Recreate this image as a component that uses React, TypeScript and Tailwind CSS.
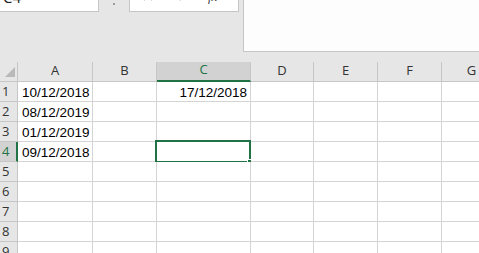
import { X, Check } from 'lucide-react';

const cols = [
  { key: 'A', w: 'w-[75px]' },
  { key: 'B', w: 'w-[64px]' },
  { key: 'C', w: 'w-[94px]' },
  { key: 'D', w: 'w-[63px]' },
  { key: 'E', w: 'w-[64px]' },
  { key: 'F', w: 'w-[64px]' },
  { key: 'G', w: 'w-[60px]' },
];

const data: Record<string, string> = {
  A1: '10/12/2018',
  A2: '08/12/2019',
  A3: '01/12/2019',
  A4: '09/12/2018',
  C1: '17/12/2018',
};

const rows = [1, 2, 3, 4, 5, 6, 7, 8, 9];

export default function App() {
  return (
    <div className="w-[479px] h-[253px] overflow-hidden bg-[#e6e6e6] font-['Liberation_Sans',Arial,sans-serif]">
      {/* Formula bar area */}
      <div className="flex h-[62px]">
        <div className="flex items-start w-[243px] shrink-0">
          <div className="w-[99px] h-[12px] bg-white border-r border-b border-[#c6c6c6] overflow-hidden">
            <div className="-mt-[11px] pl-[3px] text-[15px] leading-[16px] text-[#222] font-['Open_Sans',sans-serif]">C4</div>
          </div>
          <div className="w-[30px] flex justify-center pt-[3px]">
            <div className="w-[2px] h-[2px] bg-[#9a9a9a]" />
          </div>
          <div className="w-[110px] h-[12px] bg-white border-l border-r border-b border-[#c6c6c6] overflow-hidden flex items-start">
            <X className="w-[14px] h-[14px] -mt-[10px] ml-[11px] text-[#c4c4c4]" strokeWidth={1.5} />
            <Check className="w-[14px] h-[14px] -mt-[10px] ml-[20px] text-[#c4c4c4]" strokeWidth={2.5} />
            <span className="-mt-[10px] ml-[19px] text-[13px] leading-[14px] italic text-[#444] font-['Liberation_Serif',serif]">fx</span>
          </div>
        </div>
        <div className="w-[236px] shrink-0 h-[52px] bg-[#fdfdfd] border-l border-b border-[#c6c6c6]" />
      </div>

      {/* Column headers */}
      <div className="flex h-[20px]">
        <div className="w-[18px] shrink-0 h-[20px] border-r border-b border-[#c6c6c6] flex items-end justify-end pr-[2px] pb-[4px]">
          <svg width="10" height="10" viewBox="0 0 10 10">
            <polygon points="10,0 10,10 0,10" fill="#b9b9b9" />
          </svg>
        </div>
        {cols.map((c) => (
          <div
            key={c.key}
            className={`${c.w} shrink-0 h-[20px] flex items-center justify-center text-[13px] leading-none pb-[3px] font-['Open_Sans',sans-serif] border-r border-[#c6c6c6] ${
              c.key === 'C'
                ? 'bg-[#d2d2d2] border-b-2 border-b-[#217346] text-[#217346]'
                : 'border-b border-b-[#c6c6c6] text-[#333]'
            }`}
          >
            {c.key}
          </div>
        ))}
      </div>

      {/* Rows */}
      {rows.map((r) => (
        <div key={r} className="flex h-[20px]">
          <div
            className={`w-[18px] shrink-0 h-[20px] border-b border-[#c6c6c6] pl-[2px] text-[13px] leading-[19px] font-['Open_Sans',sans-serif] ${
              r === 4 ? 'border-r-2 border-r-[#217346] text-[#217346] bg-[#d2d2d2]' : 'border-r border-r-[#c6c6c6] text-[#333]'
            }`}
          >
            {r}
          </div>
          {cols.map((c) => {
            const id = `${c.key}${r}`;
            const value = data[id];
            return (
              <div
                key={id}
                className={`${c.w} shrink-0 h-[20px] bg-white border-r border-b border-[#d4d4d4] relative text-[13.5px] leading-[21px] text-black whitespace-nowrap ${
                  c.key === 'C' ? 'text-right pr-[3px]' : 'pl-[4px]'
                }`}
              >
                {value}
                {id === 'C4' && (
                  <div className="absolute -left-[2px] -top-[2px] w-[96px] h-[23px] border-2 border-[#217346]">
                    <div className="absolute -right-[4px] -bottom-[4px] w-[6px] h-[6px] bg-[#217346] border border-white" />
                  </div>
                )}
              </div>
            );
          })}
        </div>
      ))}
    </div>
  );
}
